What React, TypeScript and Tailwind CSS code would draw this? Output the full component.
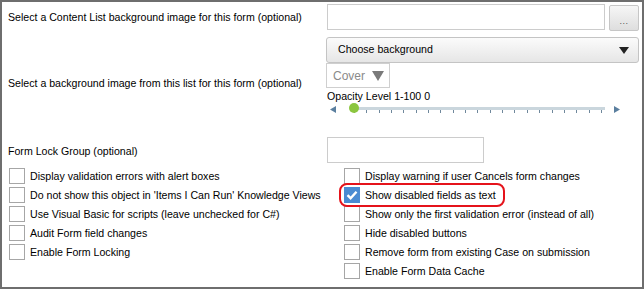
import React from "react";

const leftOptions = [
  "Display validation errors with alert boxes",
  "Do not show this object in 'Items I Can Run' Knowledge Views",
  "Use Visual Basic for scripts (leave unchecked for C#)",
  "Audit Form field changes",
  "Enable Form Locking",
];

const rightOptions = [
  { label: "Display warning if user Cancels form changes", checked: false },
  { label: "Show disabled fields as text", checked: true },
  { label: "Show only the first validation error (instead of all)", checked: false },
  { label: "Hide disabled buttons", checked: false },
  { label: "Remove form from existing Case on submission", checked: false },
  { label: "Enable Form Data Cache", checked: false },
];

function Checkbox({ checked }: { checked?: boolean }) {
  if (checked) {
    return (
      <div className="w-[16px] h-[16px] shrink-0 bg-[#4a8bd2] flex items-center justify-center">
        <svg width="12" height="10" viewBox="0 0 12 10">
          <path d="M1.5 5.2 L4.6 8.2 L10.5 1.8" fill="none" stroke="#fff" strokeWidth="2.4" />
        </svg>
      </div>
    );
  }
  return <div className="w-[16px] h-[16px] shrink-0 border border-[#a6a6a6] bg-white" />;
}

function OptionRow({ label, checked }: { label: string; checked?: boolean }) {
  return (
    <div className="flex items-start h-[19px]">
      <Checkbox checked={checked} />
      <span className="ml-[5px] leading-[17px] whitespace-nowrap">{label}</span>
    </div>
  );
}

function Slider() {
  const ticks = Array.from({ length: 21 }, (_, i) => i);
  return (
    <div className="flex items-start h-[16px] mt-[2px]">
      <svg width="6" height="7" viewBox="0 0 6 7" className="ml-[4px] mt-[2px]">
        <polygon points="6,0 6,7 0,3.5" fill="#5b7f9f" />
      </svg>
      <div className="relative ml-[15px] w-[254px] h-[12px]">
        <div className="absolute left-0 right-0 top-[3px] h-[3px] bg-[#cad6dd]" />
        <div className="absolute left-[3px] w-[248px] top-[6px] flex justify-between">
          {ticks.map((t) => (
            <div key={t} className="w-px h-[3px] bg-[#6f889c]" />
          ))}
        </div>
        <div className="absolute left-[-2px] top-[-1px] w-[10px] h-[10px] rounded-full bg-[#8cc63f]" />
      </div>
      <svg width="6" height="7" viewBox="0 0 6 7" className="ml-[9px] mt-[2px]">
        <polygon points="0,0 0,7 6,3.5" fill="#5b7f9f" />
      </svg>
    </div>
  );
}

export default function App() {
  return (
    <div className="relative w-[644px] h-[289px] bg-white border-2 border-[#6e6e6e] font-['Liberation_Sans',Arial,sans-serif] text-[10.6px] text-black">
      {/* row 1 */}
      <div className="flex mt-[2px] h-[27px]">
        <div className="w-[324px] pl-[6px] flex items-center">
          Select a Content List background image for this form (optional)
        </div>
        <div className="flex items-start">
          <div className="ml-[1px] w-[278px] h-[26px] border border-[#cccccc] bg-white" />
          <div className="ml-[4px] mt-[1px] w-[30px] h-[26px] border border-[#c6c6c6] rounded-[2px] bg-gradient-to-b from-[#f6f6f6] to-[#dedede] flex items-end justify-center pb-[6px]">
            <span className="text-[9px] leading-[6px] text-[#555] tracking-[0.5px]">...</span>
          </div>
        </div>
      </div>

      {/* row 2 */}
      <div className="flex mt-[6px] h-[94px]">
        <div className="w-[324px] pl-[6px] flex items-center">
          Select a background image from this list for this form (optional)
        </div>
        <div className="flex flex-col">
          <div className="w-[313px] h-[26px] border border-[#c4c4c4] rounded-[3px] bg-gradient-to-b from-[#fbfbfb] to-[#e6e6e6] flex items-center justify-between pl-[11px] pr-[9px]">
            <span>Choose background</span>
            <svg width="10" height="7" viewBox="0 0 10 7">
              <polygon points="0,0 10,0 5,7" fill="#222" />
            </svg>
          </div>
          <div className="w-[64px] h-[25px] border border-[#cfcfcf] bg-white flex items-center pl-[6px]">
            <span className="text-[12px] text-[#8a8a8a]">Cover</span>
            <svg width="12" height="10" viewBox="0 0 12 10" className="ml-[7px]">
              <polygon points="0,0 12,0 6,10" fill="#7a7a7a" />
            </svg>
          </div>
          <div className="ml-[1px] mt-[2px] leading-[12px]">Opacity Level 1-100 0</div>
          <Slider />
        </div>
      </div>

      {/* row 3 */}
      <div className="flex mt-[6px] h-[26px]">
        <div className="w-[324px] pl-[6px] flex items-center pt-[3px]">Form Lock Group (optional)</div>
        <div className="ml-[1px] w-[157px] h-[26px] border border-[#cccccc] bg-white" />
      </div>

      {/* options */}
      <div className="flex mt-[5px]">
        <div className="w-[342px] pl-[7px] flex flex-col">
          {leftOptions.map((o) => (
            <OptionRow key={o} label={o} />
          ))}
        </div>
        <div className="flex flex-col">
          {rightOptions.map((o) => (
            <OptionRow key={o.label} label={o.label} checked={o.checked} />
          ))}
        </div>
      </div>

      {/* highlight ring */}
      <div className="absolute left-[337px] top-[181px] w-[166px] h-[24px] border-2 border-[#e5131b] rounded-[8px]" />
    </div>
  );
}
